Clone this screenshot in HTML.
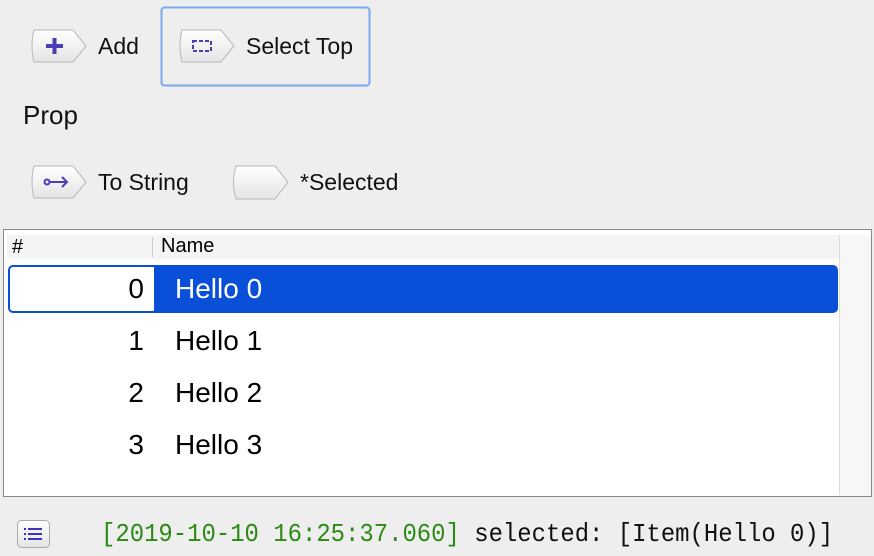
<!DOCTYPE html><html><head><style>
body{margin:0;width:874px;height:556px;background:#eeeeee;font-family:"Liberation Sans",sans-serif;position:relative;overflow:hidden}
.a{position:absolute}
.t{font-size:23px;color:#111}
.r{font-size:28px}
</style></head><body>
<svg class="a" style="left:0;top:0" width="874" height="220">
<defs><linearGradient id="g" x1="0" y1="0" x2="0" y2="1"><stop offset="0" stop-color="#fff"/><stop offset="1" stop-color="#e4e4e4"/></linearGradient></defs>
<path d="M34 30 H73 L86 46 L73 62 H34 Q30 46 34 30Z" fill="url(#g)" stroke="#b8b8b8"/>
<path d="M46 46H63M54.5 38V54" stroke="#4a3fb5" stroke-width="4"/>
<rect x="161.5" y="7.5" width="208" height="78" rx="3" fill="none" stroke="#7aa9ee" stroke-width="2"/>
<path d="M182 30 H221 L234 46 L221 62 H182 Q178 46 182 30Z" fill="url(#g)" stroke="#b8b8b8"/>
<rect x="193" y="41" width="18" height="10" fill="none" stroke="#4a3fb5" stroke-width="2" stroke-dasharray="4 2"/>
<path d="M34 166 H73 L86 182 L73 198 H34 Q30 182 34 166Z" fill="url(#g)" stroke="#b8b8b8"/>
<circle cx="47" cy="182" r="2.5" fill="none" stroke="#4a3fb5" stroke-width="2"/><path d="M50 182H67M62 177L67 182L62 187" fill="none" stroke="#4a3fb5" stroke-width="2"/>
<path d="M236 166 H275 L288 182 L275 199 H236 Q231 182 236 166Z" fill="url(#g)" stroke="#b8b8b8"/>
</svg>
<div class="a t" style="left:98px;top:33px">Add</div>
<div class="a t" style="left:246px;top:33px">Select Top</div>
<div class="a" style="left:23px;top:100px;font-size:26px;color:#111">Prop</div>
<div class="a t" style="left:98px;top:169px">To String</div>
<div class="a t" style="left:300px;top:169px">*Selected</div>
<div class="a" style="left:3px;top:229px;width:867px;height:266px;border:1px solid #888;background:#fff">
 <div class="a" style="left:3px;top:5px;width:834px;height:24px;background:#f4f4f4"></div>
 <div class="a" style="left:148px;top:7px;width:1px;height:20px;background:#ccc"></div>
 <div class="a" style="left:835px;top:5px;width:1px;height:260px;background:#ddd"></div>
 <div class="a" style="left:836px;top:5px;width:31px;height:261px;background:#f7f7f7"></div>
 <div class="a" style="left:8px;top:6px;font-size:20px">#</div>
 <div class="a" style="left:157px;top:5px;font-size:20px">Name</div>
 <div class="a" style="left:4px;top:35px;width:826px;height:44px;border:2px solid #0a4fd8;border-radius:5px;background:#0a4fd8;overflow:hidden">
  <div class="a" style="left:0;top:0;width:144px;height:44px;background:#fff"></div>
 </div>
 <div class="a r" style="left:0;top:43px;width:140px;text-align:right">0</div>
 <div class="a r" style="left:171px;top:43px;color:#fff">Hello 0</div>
 <div class="a r" style="left:0;top:95px;width:140px;text-align:right">1</div>
 <div class="a r" style="left:171px;top:95px">Hello 1</div>
 <div class="a r" style="left:0;top:147px;width:140px;text-align:right">2</div>
 <div class="a r" style="left:171px;top:147px">Hello 2</div>
 <div class="a r" style="left:0;top:199px;width:140px;text-align:right">3</div>
 <div class="a r" style="left:171px;top:199px">Hello 3</div>
</div>
<svg class="a" style="left:17px;top:520px" width="44" height="32">
<defs><linearGradient id="g2" x1="0" y1="0" x2="0" y2="1"><stop offset="0" stop-color="#fff"/><stop offset="1" stop-color="#e4e4e4"/></linearGradient></defs>
<rect x="0.5" y="0.5" width="32" height="27" rx="4" fill="url(#g2)" stroke="#aaa"/>
<path d="M7 9H9M11 9H25M7 14H9M11 14H25M7 19H9M11 19H25" stroke="#3b34c0" stroke-width="2"/>
</svg>
<div class="a" style="left:101px;top:519px;font-family:'Liberation Mono',monospace;font-size:26px;letter-spacing:0;white-space:nowrap;color:#111;transform:scaleX(0.92);transform-origin:0 0"><span style="color:#2a8a14">[2019-10-10 16:25:37.060]</span> selected: [Item(Hello 0)]</div>
</body></html>
